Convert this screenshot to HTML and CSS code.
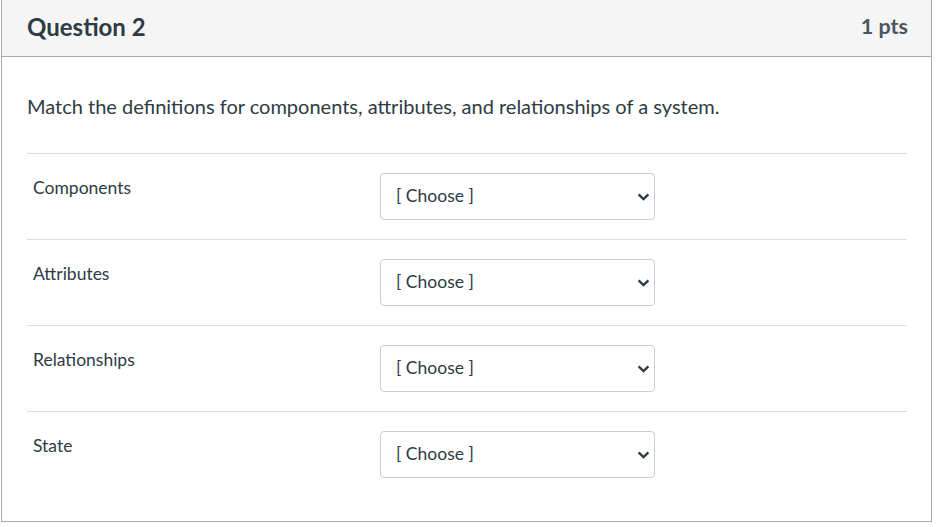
FILE: index.html
```html
<!DOCTYPE html>
<html>
<head>
<meta charset="utf-8">
<link rel="stylesheet" href="styles.css">
</head>
<body>
<div class="question">
  <div class="header">
    <h2 class="title">Question 2</h2>
    <div class="pts">1 pts</div>
  </div>
  <div class="content">
    <p class="text">Match the definitions for components, attributes, and relationships of a system.</p>
    <div class="rows">
      <div class="row">
        <div class="label">Components</div>
        <div class="select"><span>[ Choose ]</span><svg class="chev" viewBox="0 0 13 8" width="13" height="8"><path d="M1.6 1.4 L6.5 6 L11.4 1.4" fill="none" stroke="#2d3b45" stroke-width="2.4"/></svg></div>
      </div>
      <div class="row">
        <div class="label">Attributes</div>
        <div class="select"><span>[ Choose ]</span><svg class="chev" viewBox="0 0 13 8" width="13" height="8"><path d="M1.6 1.4 L6.5 6 L11.4 1.4" fill="none" stroke="#2d3b45" stroke-width="2.4"/></svg></div>
      </div>
      <div class="row">
        <div class="label">Relationships</div>
        <div class="select"><span>[ Choose ]</span><svg class="chev" viewBox="0 0 13 8" width="13" height="8"><path d="M1.6 1.4 L6.5 6 L11.4 1.4" fill="none" stroke="#2d3b45" stroke-width="2.4"/></svg></div>
      </div>
      <div class="row">
        <div class="label">State</div>
        <div class="select"><span>[ Choose ]</span><svg class="chev" viewBox="0 0 13 8" width="13" height="8"><path d="M1.6 1.4 L6.5 6 L11.4 1.4" fill="none" stroke="#2d3b45" stroke-width="2.4"/></svg></div>
      </div>
    </div>
  </div>
</div>
</body>
</html>
```
FILE: styles.css
```css
html, body {
  margin: 0;
  padding: 0;
  background: #ffffff;
}
body {
  font-family: Lato, "Open Sans", sans-serif;
  color: #2d3b45;
}
.question {
  margin-left: 1px;
  width: 931px;
  height: 522px;
  border: 1px solid #aaaaaa;
  border-top: none;
  box-sizing: border-box;
}
.header {
  height: 57px;
  background: #f5f5f5;
  border-bottom: 1px solid #aaaaaa;
  box-sizing: border-box;
  display: flex;
  align-items: center;
  justify-content: space-between;
  padding: 0 23px 0 25px;
}
.title {
  margin: 0;
  font-size: 24px;
  font-weight: 700;
  color: #2d3b45;
  padding-bottom: 3px;
}
.pts {
  font-size: 21.5px;
  font-weight: 700;
  color: #4a5560;
  padding-bottom: 5px;
}
.content {
  padding: 0 24px 0 25px;
}
.text {
  margin: 0;
  padding-top: 36px;
  font-size: 20px;
  line-height: 26px;
  height: 60px;
}
.row {
  border-top: 1px solid #dddddd;
  height: 86px;
  box-sizing: border-box;
  display: flex;
  align-items: flex-start;
}
.label {
  width: 347px;
  padding: 23px 0 0 6px;
  font-size: 17.5px;
  line-height: 22px;
}
.select {
  margin-top: 19px;
  width: 275px;
  height: 47px;
  box-sizing: border-box;
  border: 1px solid #c7cdd1;
  border-radius: 4px;
  display: flex;
  align-items: center;
  justify-content: space-between;
  padding: 0 4px 0 15px;
  font-size: 17.5px;
}
.select span {
  padding-bottom: 2px;
}
.chev {
  display: block;
}
```
